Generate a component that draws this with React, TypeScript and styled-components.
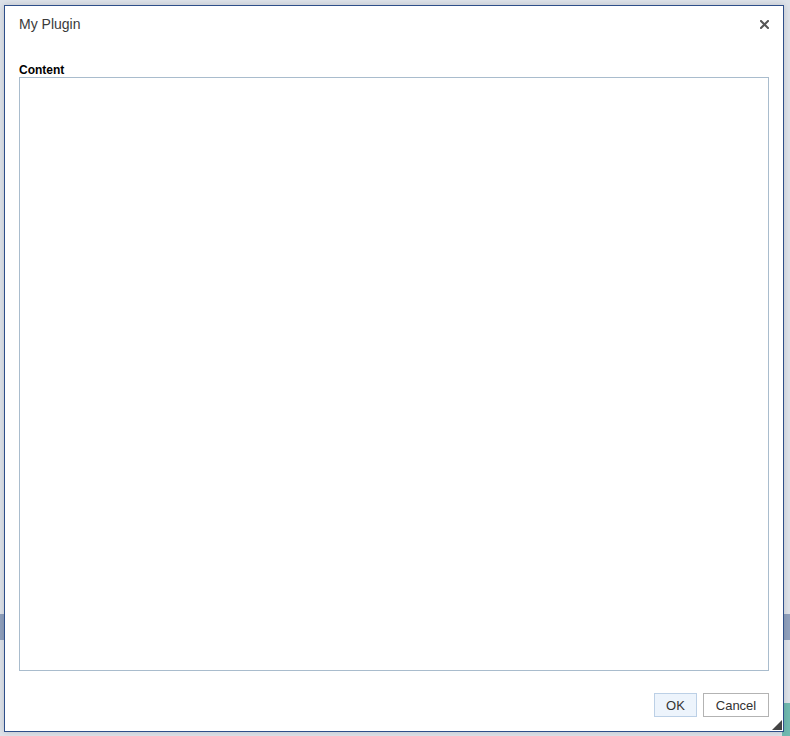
import React from "react";
import styled, { createGlobalStyle } from "styled-components";

const GlobalStyle = createGlobalStyle`
  html, body {
    margin: 0;
    padding: 0;
    background: #dde2e9;
    font-family: Arial, "Liberation Sans", Helvetica, sans-serif;
  }
`;

const Page = styled.div`
  position: relative;
  width: 790px;
  height: 736px;
  overflow: hidden;
  background: #dde2e9;
`;

const BackdropStripe = styled.div<{ $top: number; $height: number; $color: string; $side: "left" | "right" }>`
  position: absolute;
  top: ${({ $top }) => $top}px;
  height: ${({ $height }) => $height}px;
  ${({ $side }) => ($side === "left" ? "left: 0;" : "right: 0;")}
  width: 8px;
  background: ${({ $color }) => $color};
`;

const Dialog = styled.div`
  position: absolute;
  left: 4px;
  top: 5px;
  width: 778px;
  height: 725px;
  display: flex;
  flex-direction: column;
  background: #ffffff;
  border: 1px solid #2e4f8a;
  box-shadow: 0 0 6px rgba(0, 0, 0, 0.15);
`;

const Header = styled.div`
  height: 57px;
  box-sizing: border-box;
  display: flex;
  align-items: flex-start;
  justify-content: space-between;
  padding: 10px 12px 0 14px;
`;

const Title = styled.span`
  font-size: 14px;
  line-height: 16px;
  color: #3a3a3a;
`;

const CloseButton = styled.button`
  all: unset;
  cursor: pointer;
  width: 14px;
  height: 14px;
  display: flex;
  align-items: center;
  justify-content: center;
  margin-top: 1px;
`;

const Body = styled.div`
  flex: 1;
  display: flex;
  flex-direction: column;
  padding: 0 14px;
`;

const Label = styled.label`
  font-size: 12px;
  font-weight: bold;
  line-height: 14px;
  color: #000000;
`;

const TextArea = styled.textarea`
  display: block;
  box-sizing: border-box;
  width: 100%;
  height: 594px;
  margin: 0;
  border: 1px solid #a9bccd;
  resize: none;
  outline: none;
  font-family: inherit;
  font-size: 13px;
`;

const Footer = styled.div`
  height: 60px;
  box-sizing: border-box;
  display: flex;
  justify-content: flex-end;
  align-items: flex-start;
  gap: 6px;
  padding: 22px 14px 0 14px;
  position: relative;
`;

const Button = styled.button<{ $primary?: boolean }>`
  box-sizing: border-box;
  height: 24px;
  padding: 0;
  width: ${({ $primary }) => ($primary ? "43px" : "66px")};
  font-family: inherit;
  font-size: 13px;
  color: #333333;
  cursor: pointer;
  background: ${({ $primary }) => ($primary ? "#edf4fc" : "#ffffff")};
  border: 1px solid ${({ $primary }) => ($primary ? "#bcd0e6" : "#b3b3b3")};
`;

const ResizeHandle = styled.div`
  position: absolute;
  right: 1px;
  bottom: 1px;
  width: 0;
  height: 0;
  border-left: 10px solid transparent;
  border-bottom: 10px solid #444444;
`;

export default function App() {
  return (
    <Page>
      <GlobalStyle />
      <BackdropStripe $side="left" $top={614} $height={26} $color="#8fa0bd" />
      <BackdropStripe $side="right" $top={614} $height={26} $color="#8fa0bd" />
      <BackdropStripe $side="right" $top={703} $height={33} $color="#6fb9b0" />
      <Dialog>
        <Header>
          <Title>My Plugin</Title>
          <CloseButton aria-label="Close">
            <svg width="9" height="9" viewBox="0 0 9 9">
              <path d="M1 1 L8 8 M8 1 L1 8" stroke="#555555" strokeWidth="2" strokeLinecap="square" />
            </svg>
          </CloseButton>
        </Header>
        <Body>
          <Label htmlFor="content">Content</Label>
          <TextArea id="content" />
        </Body>
        <Footer>
          <Button $primary>OK</Button>
          <Button>Cancel</Button>
          <ResizeHandle />
        </Footer>
      </Dialog>
    </Page>
  );
}
